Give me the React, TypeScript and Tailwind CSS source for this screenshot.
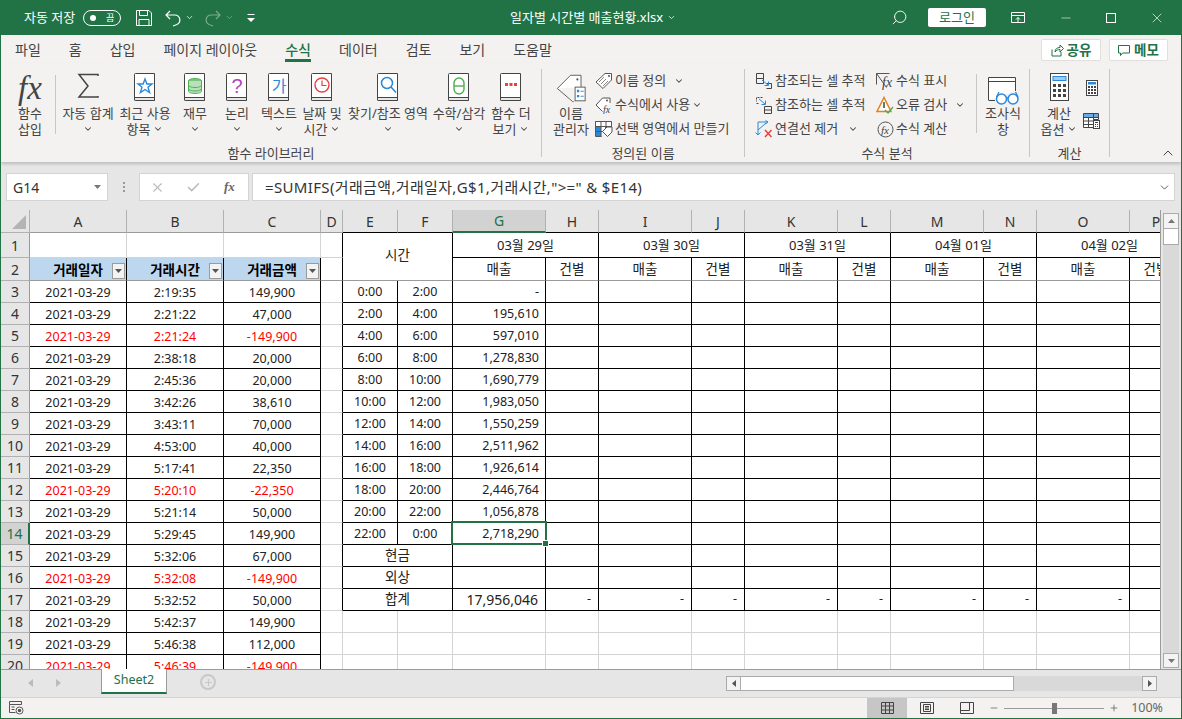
import { ReactNode } from "react";
import { ChevronDown, ChevronUp, Search, X, Minus, Plus, Check } from "lucide-react";
import clsx from "clsx";

const FONT = "font-['Noto_Sans','Noto_Sans_CJK_KR',sans-serif]";

// ---------- sheet data ----------
const SALES: [string, string, boolean][] = [
  ["2:19:35", "149,900", false],
  ["2:21:22", "47,000", false],
  ["2:21:24", "-149,900", true],
  ["2:38:18", "20,000", false],
  ["2:45:36", "20,000", false],
  ["3:42:26", "38,610", false],
  ["3:43:11", "70,000", false],
  ["4:53:00", "40,000", false],
  ["5:17:41", "22,350", false],
  ["5:20:10", "-22,350", true],
  ["5:21:14", "50,000", false],
  ["5:29:45", "149,900", false],
  ["5:32:06", "67,000", false],
  ["5:32:08", "-149,900", true],
  ["5:32:52", "50,000", false],
  ["5:42:37", "149,900", false],
  ["5:46:38", "112,000", false],
  ["5:46:39", "-149,900", true],
];

const SLOTS: [string, string, string][] = [
  ["0:00", "2:00", "-"],
  ["2:00", "4:00", "195,610"],
  ["4:00", "6:00", "597,010"],
  ["6:00", "8:00", "1,278,830"],
  ["8:00", "10:00", "1,690,779"],
  ["10:00", "12:00", "1,983,050"],
  ["12:00", "14:00", "1,550,259"],
  ["14:00", "16:00", "2,511,962"],
  ["16:00", "18:00", "1,926,614"],
  ["18:00", "20:00", "2,446,764"],
  ["20:00", "22:00", "1,056,878"],
  ["22:00", "0:00", "2,718,290"],
];

const COLUMNS = ["A", "B", "C", "D", "E", "F", "G", "H", "I", "J", "K", "L", "M", "N", "O", "P"];
const DATES = ["03월 29일", "03월 30일", "03월 31일", "04월 01일", "04월 02일"];
const TABS = ["파일", "홈", "삽입", "페이지 레이아웃", "수식", "데이터", "검토", "보기", "도움말"];
const RIGHT_EMPTY = ["H", "I", "J", "K", "L", "M", "N", "O", "P"];

// ---------- ribbon icons ----------
function Book({ children }: { children?: ReactNode }) {
  return (
    <svg width="22" height="28" viewBox="0 0 22 28" className="shrink-0">
      <path d="M1.500.5h19v27h-19a1 1 0 0 1-1-1V1.500a1 1 0 0 1 1-1z" fill="#fff" stroke="#444" />
      <path d="M.5 24.500h20" stroke="#444" />
      <path d="M1 25h19v2.500H1z" fill="#e8e8e8" />
      <path d="M.5 25.500v1a1 1 0 0 0 1 1h19" fill="none" stroke="#444" />
      {children}
    </svg>
  );
}

function Chevron({ className }: { className?: string }) {
  return <ChevronDown size={10} strokeWidth={2.500} className={clsx("text-[#444] shrink-0", className)} />;
}

function RibbonButton({
  width,
  icon,
  line1,
  line2,
  chevron,
}: {
  width: string;
  icon: ReactNode;
  line1: string;
  line2?: string;
  chevron?: boolean;
}) {
  return (
    <div className={clsx("flex flex-col items-center shrink-0", width)}>
      <div className="h-[32px] flex items-start justify-center">{icon}</div>
      <div className="text-[13px] leading-[16px] text-[#444] whitespace-nowrap">{line1}</div>
      <div className="h-[16px] text-[13px] leading-[16px] text-[#444] whitespace-nowrap flex items-center gap-[3px]">
        {line2}
        {chevron && <Chevron />}
      </div>
    </div>
  );
}

function TagIcon() {
  return (
    <svg width="18" height="18" viewBox="0 0 18 18" className="shrink-0">
      <path d="M1 10 10 1.500h6.500V8L8 16.500z" fill="#fff" stroke="#555" />
      <path d="M4 10l5-5M6 12l5-5M8 14l5-5" stroke="#888" />
      <circle cx="14" cy="4" r="1" fill="#555" />
    </svg>
  );
}

function NameManagerIcon() {
  return (
    <svg width="30" height="31" viewBox="0 0 32 34" className="shrink-0">
      <path d="M1 17 15.500 2.500H27v13M19 31.500h-1L1 17" fill="#fff" stroke="#555" />
      <circle cx="23" cy="7" r="1.200" fill="#555" />
      <rect x="20.500" y="15.500" width="11" height="15" fill="#fff" stroke="#555" />
      <path d="M22.500 18.500h2.500v2.500h-2.500zM22.500 24h2.500v2.500h-2.500z" fill="#2b88d8" />
      <path d="M26.500 20h3.500M26.500 25.500h3.500" stroke="#2b88d8" />
    </svg>
  );
}

function UseInFormulaIcon() {
  return (
    <svg width="18" height="18" viewBox="0 0 18 18" className="shrink-0">
      <path d="M7.500 15.500 1 9l6.500-7H15v5" fill="#fff" stroke="#555" />
      <circle cx="12" cy="4.500" r="1" fill="#555" />
      <text x="8" y="17" fontSize="10" fontStyle="italic" fontFamily="Liberation Serif, serif" fill="#444">
        fx
      </text>
    </svg>
  );
}

function FromSelectionIcon() {
  return (
    <svg width="18" height="16" viewBox="0 0 18 16" className="shrink-0">
      <path d="M.5.500h16v5h-6v5h-10z" fill="#fff" stroke="#555" />
      <path d="M1 5.500h5v10H1z" fill="#2b88d8" />
      <path d="M.5 5.500h16M6 .500v15M11 .500v5M.5 10.500h6M.5.500v15h6" fill="none" stroke="#555" />
      <path d="M7.500 10.500 12 6h5v5l-4.500 4.500z" fill="#fff" stroke="#555" />
    </svg>
  );
}

function TracePrecedentsIcon() {
  return (
    <svg width="18" height="18" viewBox="0 0 18 18" className="shrink-0">
      <path d="M1.500 1.500h7v5h-7zM1.500 6.500v5h7v-5" fill="none" stroke="#444" />
      <path d="M11.500 12.500h5v5h-5" fill="none" stroke="#444" transform="translate(0 -1)" />
      <path d="M7 8l6 5M13.500 9.500V13.500H9.500" fill="none" stroke="#2b88d8" />
    </svg>
  );
}

function TraceDependentsIcon() {
  return (
    <svg width="18" height="18" viewBox="0 0 18 18" className="shrink-0">
      <path d="M2.500 1.500h5M1.500 1.500v4M1.500 7.500h3" fill="none" stroke="#444" strokeDasharray="2 1" />
      <path d="M9.500 10.500h7v7h-7zM9.500 14h7" fill="none" stroke="#444" />
      <path d="M4 3l6 5M10.500 4.500V8.500H6.500" fill="none" stroke="#2b88d8" />
    </svg>
  );
}

function RemoveArrowsIcon() {
  return (
    <svg width="20" height="18" viewBox="0 0 20 18" className="shrink-0">
      <path d="M4 15V2h10M11.500.500 14 2l-2.500 2M1.500 12.500 4 15l2.500-2.500M4 10l8-7" fill="none" stroke="#2b88d8" />
      <path d="M11 10l6.500 7M17.500 10 11 17" stroke="#e8403f" strokeWidth="1.500" />
    </svg>
  );
}

function ShowFormulasIcon() {
  return (
    <svg width="18" height="18" viewBox="0 0 18 18" className="shrink-0">
      <path d="M.5 1.500h13M.5 1.500v11M.5 1.500l10 14" fill="none" stroke="#555" />
      <text x="6" y="15" fontSize="14" fontStyle="italic" fontFamily="Liberation Serif, serif" fill="#444">
        fx
      </text>
    </svg>
  );
}

function ErrorCheckIcon() {
  return (
    <svg width="18" height="18" viewBox="0 0 18 18" className="shrink-0">
      <path d="M8 1.500 1 15.500h14z" fill="#fff" stroke="#e8801a" strokeWidth="1.500" />
      <path d="M8 6v6" stroke="#444" strokeWidth="1.500" />
      <path d="M9 14l3 3 5-6" fill="none" stroke="#4caf50" strokeWidth="1.300" />
    </svg>
  );
}

function EvaluateIcon() {
  return (
    <svg width="17" height="17" viewBox="0 0 17 17" className="shrink-0">
      <circle cx="8.500" cy="8.500" r="7.500" fill="none" stroke="#555" />
      <text x="4" y="12.500" fontSize="11" fontStyle="italic" fontFamily="Liberation Serif, serif" fill="#444">
        fx
      </text>
    </svg>
  );
}

function WatchIcon() {
  return (
    <svg width="32" height="29" viewBox="0 0 32 29" className="shrink-0">
      <path d="M1.500 24V1.500h27V15" fill="#fff" stroke="#444" />
      <path d="M1.500 5.500h27" stroke="#444" />
      <path d="M1.500 24.500H8" stroke="#444" />
      <circle cx="14.500" cy="23" r="5" fill="#fff" stroke="#2b88d8" strokeWidth="1.500" />
      <circle cx="26" cy="23" r="5" fill="#fff" stroke="#2b88d8" strokeWidth="1.500" />
      <path d="M19.500 22h2M9.500 21 12 16M31 21l-2.500-5" fill="none" stroke="#2b88d8" strokeWidth="1.300" />
    </svg>
  );
}

function BigCalcIcon() {
  const keys = [0, 1, 2];
  return (
    <svg width="19" height="28" viewBox="0 0 19 28" className="shrink-0">
      <rect x=".5" y=".5" width="18" height="27" fill="#fff" stroke="#444" />
      <rect x="3" y="3.500" width="13" height="4" fill="#9ecbf0" stroke="#2b88d8" />
      {keys.map((r) =>
        keys.map((c) => <rect key={`${r}${c}`} x={3 + c * 5} y={11 + r * 5} width="3" height="3" fill="#444" />),
      )}
    </svg>
  );
}

function SmallCalcIcon() {
  const rows = [0, 1, 2];
  const cols = [0, 1, 2];
  return (
    <svg width="12" height="16" viewBox="0 0 12 16" className="shrink-0">
      <rect x=".5" y=".5" width="11" height="15" fill="#fff" stroke="#444" />
      <rect x="2" y="2" width="8" height="2.500" fill="#2b88d8" />
      {rows.map((r) =>
        cols.map((c) => <rect key={`${r}${c}`} x={2 + c * 3} y={6 + r * 3} width="2" height="2" fill="#444" />),
      )}
    </svg>
  );
}

function CalcSheetIcon() {
  return (
    <svg width="17" height="16" viewBox="0 0 17 16" className="shrink-0">
      <path d="M.5.500h15v6h-5v8H.5z" fill="#fff" stroke="#444" />
      <rect x="1" y="1" width="14" height="3" fill="#2b88d8" opacity=".7" />
      <path d="M.5 4.500h15M.5 8h10M.5 11.500h10M5.500 4.500v10M10.500.500v6" stroke="#444" />
      <rect x="10.500" y="7.500" width="6" height="8" fill="#fff" stroke="#444" />
      <path d="M12 9.500h3M12 11.500h1M14 11.500h1M12 13.500h1M14 13.500h1" stroke="#444" />
    </svg>
  );
}

function Separator({ className }: { className?: string }) {
  return <div className={clsx("w-px bg-[#c8c6c4] shrink-0", className)} />;
}

function SmallRow({ icon, label, chevron, gap }: { icon: ReactNode; label: string; chevron?: string; gap?: string }) {
  return (
    <div className="h-[24px] flex items-center whitespace-nowrap text-[13px] text-[#444]">
      <span className="w-[20px] flex justify-center shrink-0">{icon}</span>
      <span className={clsx("ml-[1px]", gap)}>{label}</span>
      {chevron !== undefined && <Chevron className={chevron} />}
    </div>
  );
}

function GroupLabel({ children }: { children: string }) {
  return <div className="h-[20px] text-center text-[13px] leading-[22px] text-[#444] whitespace-nowrap">{children}</div>;
}

function Ribbon() {
  return (
    <div className="h-[99px] bg-[#f3f2f1] flex shrink-0 shadow-[0_2px_3px_rgba(0,0,0,0.18)] relative z-10">
      {/* 함수 라이브러리 */}
      <div className="w-[540px] shrink-0 flex flex-col">
        <div className="h-[79px] pt-[10px] flex">
          <div className="w-[54px] shrink-0 flex flex-col items-center pl-[4px]">
            <div className="h-[32px] text-[33px] leading-[30px] italic font-['Liberation_Serif',serif] text-[#444]">fx</div>
            <div className="text-[13px] leading-[16px] text-[#444]">함수</div>
            <div className="text-[13px] leading-[16px] text-[#444]">삽입</div>
          </div>
          <Separator className="h-[59px] mt-[2px]" />
          <div className="flex pl-[1px]">
            <RibbonButton
              width="w-[62px]"
              line1="자동 합계"
              chevron
              icon={
                <svg width="22" height="26" viewBox="0 0 22 26">
                  <path d="M21 3V1.500H2l9 11.500-9 11h19V23" fill="none" stroke="#444" strokeWidth="1.500" />
                </svg>
              }
            />
            <RibbonButton
              width="w-[52px]"
              line1="최근 사용"
              line2="항목"
              chevron
              icon={
                <Book>
                  <path d="M11 6l1.900 5h5.100l-4 3.300 1.600 5.200L11 16.500l-4.600 3 1.600-5.200-4-3.300h5.100z" fill="#fff" stroke="#2b88d8" strokeWidth="1.400" />
                </Book>
              }
            />
            <RibbonButton
              width="w-[48px]"
              line1="재무"
              chevron
              icon={
                <Book>
                  <ellipse cx="11" cy="8" rx="6.500" ry="2.500" fill="#7cc47f" stroke="#4caf50" />
                  <path d="M4.500 8v10c0 1.500 3 2.500 6.500 2.500s6.500-1 6.500-2.500V8" fill="#b8e0ba" stroke="#4caf50" />
                  <path d="M4.500 12c0 1.500 3 2.500 6.500 2.500s6.500-1 6.500-2.500M4.500 15.500c0 1.500 3 2.500 6.500 2.500s6.500-1 6.500-2.500" fill="none" stroke="#4caf50" />
                </Book>
              }
            />
            <RibbonButton
              width="w-[36px]"
              line1="논리"
              chevron
              icon={
                <Book>
                  <text x="11" y="20" textAnchor="middle" fontSize="20" fill="#b146c2" fontFamily="Liberation Sans, sans-serif">
                    ?
                  </text>
                </Book>
              }
            />
            <RibbonButton
              width="w-[48px]"
              line1="텍스트"
              chevron
              icon={
                <Book>
                  <text x="11" y="19" textAnchor="middle" fontSize="16" fill="#2b88d8" fontFamily="Noto Sans CJK KR, sans-serif">
                    가
                  </text>
                </Book>
              }
            />
            <RibbonButton
              width="w-[38px]"
              line1="날짜 및"
              line2="시간"
              chevron
              icon={
                <Book>
                  <circle cx="11" cy="12" r="7" fill="#fff" stroke="#e8403f" strokeWidth="1.400" />
                  <path d="M11 7.500V12.500h4.500" fill="none" stroke="#e8403f" strokeWidth="1.200" />
                </Book>
              }
            />
            <RibbonButton
              width="w-[94px]"
              line1="찾기/참조 영역"
              chevron
              icon={
                <Book>
                  <circle cx="10" cy="10" r="5.500" fill="#fff" stroke="#2b88d8" strokeWidth="1.500" />
                  <path d="M14 14l5 5.500" stroke="#2b88d8" strokeWidth="1.600" />
                </Book>
              }
            />
            <RibbonButton
              width="w-[48px]"
              line1="수학/삼각"
              chevron
              icon={
                <Book>
                  <rect x="6" y="5" width="10" height="16" rx="5" fill="#fff" stroke="#4caf50" strokeWidth="1.400" />
                  <path d="M6 13h10" stroke="#4caf50" strokeWidth="1.400" />
                </Book>
              }
            />
            <RibbonButton
              width="w-[56px]"
              line1="함수 더"
              line2="보기"
              chevron
              icon={
                <Book>
                  <path d="M5 10h3v3H5zM9.500 10h3v3h-3zM14 10h3v3h-3z" fill="#e8403f" />
                </Book>
              }
            />
          </div>
        </div>
        <GroupLabel>함수 라이브러리</GroupLabel>
      </div>
      <Separator className="h-[88px] mt-[6px]" />

      {/* 정의된 이름 */}
      <div className="w-[202px] shrink-0 flex flex-col">
        <div className="h-[79px] pt-[6px] flex">
          <div className="w-[52px] pl-[6px] shrink-0 flex flex-col items-center">
            <div className="h-[32px] mt-[4px]">
              <NameManagerIcon />
            </div>
            <div className="text-[13px] leading-[16px] text-[#444]">이름</div>
            <div className="text-[13px] leading-[16px] text-[#444]">관리자</div>
          </div>
          <div className="flex flex-col">
            <SmallRow icon={<TagIcon />} label="이름 정의" gap="mr-[8px]" chevron="" />
            <SmallRow icon={<UseInFormulaIcon />} label="수식에서 사용" chevron="ml-[2px]" />
            <SmallRow icon={<FromSelectionIcon />} label="선택 영역에서 만들기" />
          </div>
        </div>
        <GroupLabel>정의된 이름</GroupLabel>
      </div>
      <Separator className="h-[88px] mt-[6px]" />

      {/* 수식 분석 */}
      <div className="w-[284px] shrink-0 flex flex-col">
        <div className="h-[79px] pt-[6px] flex">
          <div className="w-[230px] shrink-0 flex pl-[9px]">
            <div className="w-[121px] shrink-0 flex flex-col">
              <SmallRow icon={<TracePrecedentsIcon />} label="참조되는 셀 추적" />
              <SmallRow icon={<TraceDependentsIcon />} label="참조하는 셀 추적" />
              <SmallRow icon={<RemoveArrowsIcon />} label="연결선 제거" gap="mr-[10px]" chevron="" />
            </div>
            <div className="flex flex-col">
              <SmallRow icon={<ShowFormulasIcon />} label="수식 표시" />
              <SmallRow icon={<ErrorCheckIcon />} label="오류 검사" gap="mr-[8px]" chevron="" />
              <SmallRow icon={<EvaluateIcon />} label="수식 계산" />
            </div>
          </div>
          <Separator className="h-[59px] mt-[5px] ml-[1px]" />
          <div className="flex-1 flex flex-col items-center pt-[7px]">
            <div className="h-[29px]">
              <WatchIcon />
            </div>
            <div className="text-[13px] leading-[16px] text-[#444]">조사식</div>
            <div className="text-[13px] leading-[16px] text-[#444]">창</div>
          </div>
        </div>
        <GroupLabel>수식 분석</GroupLabel>
      </div>
      <Separator className="h-[88px] mt-[6px]" />

      {/* 계산 */}
      <div className="w-[79px] shrink-0 flex flex-col">
        <div className="h-[79px] pt-[10px] flex">
          <div className="w-[52px] pl-[6px] shrink-0 flex flex-col items-center">
            <div className="h-[32px]">
              <BigCalcIcon />
            </div>
            <div className="text-[13px] leading-[16px] text-[#444]">계산</div>
            <div className="text-[13px] leading-[16px] text-[#444] flex items-center gap-[3px]">
              옵션
              <Chevron />
            </div>
          </div>
          <div className="flex flex-col items-center gap-[17px] pt-[7px] pl-[1px]">
            <SmallCalcIcon />
            <CalcSheetIcon />
          </div>
        </div>
        <GroupLabel>계산</GroupLabel>
      </div>
      <Separator className="h-[88px] mt-[6px]" />

      <div className="flex-1 flex justify-end items-end pr-[5px] pb-[1px]">
        <ChevronUp size={16} strokeWidth={1.500} className="text-[#444]" />
      </div>
    </div>
  );
}

function TitleBar() {
  return (
    <div className="h-[35px] bg-[#217346] text-white flex items-center shrink-0 text-[13px] relative">
      <span className="ml-[23px] whitespace-nowrap">자동 저장</span>
      <div className="ml-[8px] w-[38px] h-[16px] rounded-full border border-white flex items-center justify-between pl-[6px] pr-[6px]">
        <span className="w-[6px] h-[6px] rounded-full bg-white" />
        <span className="text-[9px] leading-none">끔</span>
      </div>
      <svg width="18" height="18" viewBox="0 0 18 18" className="ml-[14px]">
        <path d="M1.500 1.500h12.500l2.500 2.500v12.500h-15z M4.500 1.500v5h8v-5M4 16.500v-6h10v6" fill="none" stroke="#fff" />
      </svg>
      <svg width="18" height="18" viewBox="0 0 18 18" className="ml-[11px]">
        <path d="M6 2 2 6l4 4M2.500 6H11a5 5 0 0 1 2 9.500L9 17" fill="none" stroke="#fff" strokeWidth="1.200" />
      </svg>
      <ChevronDown size={9} strokeWidth={2} className="ml-[3px] text-white" />
      <svg width="18" height="18" viewBox="0 0 18 18" className="ml-[10px] opacity-40">
        <path d="M12 2l4 4-4 4M15.500 6H7a5 5 0 0 0-2 9.500L9 17" fill="none" stroke="#fff" strokeWidth="1.200" />
      </svg>
      <ChevronDown size={9} strokeWidth={2} className="ml-[3px] text-white opacity-40" />
      <svg width="10" height="10" viewBox="0 0 10 10" className="ml-[12px]">
        <path d="M1.500 1.500h7" stroke="#fff" />
        <path d="M1 5h8L5 9z" fill="#fff" />
      </svg>
      <div className="absolute left-[509px] top-[8px] flex items-center gap-[4px] whitespace-nowrap">
        일자별 시간별 매출현황.xlsx
        <ChevronDown size={9} strokeWidth={2} />
      </div>
      <div className="ml-auto flex items-center">
        <Search size={17} strokeWidth={1.300} className="-scale-x-100" />
        <div className="ml-[20px] w-[58px] h-[19px] bg-white rounded-[2px] text-[#217346] text-[13px] leading-[19px] text-center">로그인</div>
        <svg width="14" height="12" viewBox="0 0 14 12" className="ml-[25px]">
          <path d="M.5.500h13v10H.5zM.5 3.500h13M7 10V5.500M5 7.500l2-2 2 2" fill="none" stroke="#fff" />
        </svg>
        <Minus size={14} strokeWidth={1} className="ml-[34px]" />
        <div className="ml-[33px] w-[10px] h-[10px] border border-white" />
        <X size={16} strokeWidth={1} className="ml-[33px] mr-[16px]" />
      </div>
    </div>
  );
}

function TabStrip() {
  return (
    <div className="h-[28px] bg-[#f3f2f1] flex items-start shrink-0 pl-[14px] text-[14px] text-[#444]">
      <div className="flex gap-[28px]">
        {TABS.map((t) => (
          <div key={t} className={clsx("relative h-[27px] leading-[29px] whitespace-nowrap", t === "수식" && "font-medium text-[#217346]")}>
            {t}
            {t === "수식" && <div className="absolute left-0 right-0 bottom-0 h-[3px] bg-[#217346]" />}
          </div>
        ))}
      </div>
      <div className="ml-auto flex gap-[8px] pr-[13px] pt-[4px]">
        <div className="w-[60px] h-[22px] bg-white border border-[#e1dfdd] rounded-[2px] flex items-center justify-center gap-[3px] font-bold text-[#217346] text-[13.500px]">
          <svg width="13" height="13" viewBox="0 0 13 13">
            <path d="M1 5.500v6.500h9V8M4 8c0-3 2-4.500 5-4.500V1l3.500 3.500L9 8V5.500C7 5.500 5.500 6 4 8z" fill="none" stroke="#217346" />
          </svg>
          공유
        </div>
        <div className="w-[59px] h-[22px] bg-white border border-[#e1dfdd] rounded-[2px] flex items-center justify-center gap-[3px] font-bold text-[#217346] text-[13.500px]">
          <svg width="13" height="13" viewBox="0 0 13 13">
            <path d="M.5 1.500h11v7.500H4.500L2.500 11.500V9H.5z" fill="none" stroke="#217346" />
          </svg>
          메모
        </div>
      </div>
    </div>
  );
}

function FormulaBar() {
  return (
    <div className="h-[48px] bg-[#e6e6e6] flex items-start shrink-0 pt-[11px] pl-[5px] pr-[6px]">
      <div className="w-[102px] h-[28px] bg-white border border-[#d4d4d4] flex items-center justify-between pl-[6px] pr-[6px] text-[14px] text-[#333]">
        G14
        <svg width="7" height="4" viewBox="0 0 7 4">
          <path d="M0 0h7L3.500 4z" fill="#777" />
        </svg>
      </div>
      <div className="w-[31px] h-[28px] flex flex-col items-center justify-center gap-[2px]">
        <span className="w-[2px] h-[2px] bg-[#999]" />
        <span className="w-[2px] h-[2px] bg-[#999]" />
        <span className="w-[2px] h-[2px] bg-[#999]" />
      </div>
      <div className="w-[110px] h-[28px] bg-white border border-[#d4d4d4] flex items-center pl-[10px] text-[#bbb]">
        <X size={15} strokeWidth={1.800} />
        <Check size={15} strokeWidth={2.400} className="ml-[21px]" />
        <span className="ml-[23px] text-[13px] italic font-bold font-['Liberation_Serif',serif] text-[#666]">fx</span>
      </div>
      <div className="ml-[3px] flex-1 h-[28px] bg-white border border-[#d4d4d4] flex items-center pl-[12px] pr-[3px] text-[15px] tracking-[0.35px] text-[#333] whitespace-nowrap">
        =SUMIFS(거래금액,거래일자,G$1,거래시간,"&gt;=" &amp; $E14)
        <ChevronDown size={13} strokeWidth={1.600} className="ml-auto text-[#444]" />
      </div>
    </div>
  );
}

// ---------- sheet grid ----------
const GRID = "border-[#d4d4d4]";
const BLACK = "border-black";
const CELL = "flex items-center min-w-0 whitespace-nowrap border-r border-b text-[12.500px] text-[#222]";
const KOREAN = "text-[13.500px]";

function ColHeader({ name }: { name: string }) {
  const active = name === "G";
  const framed = COLUMNS.indexOf(name) >= 4;
  return (
    <div
      className={clsx(
        "flex items-center justify-center border-r border-[#b1b1b1] text-[14px]",
        active ? "bg-[#d2d2d2] text-[#217346] border-b-2 border-b-[#217346]" : "bg-[#e6e6e6] text-[#333] border-b",
        !active && (framed ? "border-b-black" : "border-b-[#9b9b9b]"),
      )}
    >
      {name}
    </div>
  );
}

function RowHeader({ n }: { n: number }) {
  const active = n === 14;
  return (
    <div
      className={clsx(
        "flex items-center justify-center border-r text-[14px] border-b",
        active ? "bg-[#d2d2d2] text-[#217346] border-r-[#217346] border-r-2 border-b-[#b1b1b1]" : "bg-[#e6e6e6] text-[#333] border-r-[#9b9b9b] border-b-[#b1b1b1]",
        n === 2 && "border-b-[#9b9b9b]",
      )}
    >
      {n}
    </div>
  );
}

function FilterHeader({ label }: { label: string }) {
  return (
    <div className={clsx(CELL, KOREAN, "bg-[#bdd7ee] border-r-black border-b-[#9b9b9b] relative justify-center pt-[2px] font-bold text-black")}>
      {label}
      <span className="absolute right-[1px] top-[5px] w-[13px] h-[16px] bg-[#f3f3f3] border border-[#9b9b9b] flex items-center justify-center">
        <svg width="7" height="4" viewBox="0 0 7 4">
          <path d="M0 0h7L3.500 4z" fill="#555" />
        </svg>
      </span>
    </div>
  );
}

function Sheet() {
  const rows = SALES.map((s, i) => ({ n: i + 3, sale: s, slot: SLOTS[i] }));
  return (
    <div className="grid grid-cols-[29px_97px_97px_97px_22px_55px_55px_93px_53px_93px_53px_93px_53px_93px_53px_93px_53px] grid-rows-[23px_25px_23px_repeat(18,22px)] w-max">
      {/* column headers */}
      <div className="bg-[#e6e6e6] border-r border-b border-[#b1b1b1] flex items-end justify-end pr-[3px] pb-[3px]">
        <svg width="14" height="14" viewBox="0 0 14 14">
          <path d="M14 0v14H0z" fill="#b4b4b4" />
        </svg>
      </div>
      {COLUMNS.map((c) => (
        <ColHeader key={c} name={c} />
      ))}

      {/* row 1 */}
      <RowHeader n={1} />
      <div className={clsx(CELL, GRID)} />
      <div className={clsx(CELL, GRID)} />
      <div className={clsx(CELL, GRID)} />
      <div className={clsx(CELL, "border-b-[#d4d4d4] border-r-black")} />
      <div className={clsx(CELL, KOREAN, BLACK, "col-span-2 row-span-2 justify-center border-b-[#9b9b9b] pb-[2px]")}>시간</div>
      {DATES.map((d) => (
        <div key={d} className={clsx(CELL, BLACK, "col-span-2 justify-center pt-[1px] text-[13px]")}>
          {d}
        </div>
      ))}

      {/* row 2 */}
      <RowHeader n={2} />
      <FilterHeader label="거래일자" />
      <FilterHeader label="거래시간" />
      <FilterHeader label="거래금액" />
      <div className={clsx(CELL, "border-b-[#9b9b9b] border-r-black")} />
      {DATES.map((d) => [
        <div key={`${d}a`} className={clsx(CELL, KOREAN, "border-r-black border-b-[#9b9b9b] justify-center")}>
          매출
        </div>,
        <div key={`${d}b`} className={clsx(CELL, KOREAN, "border-r-black border-b-[#9b9b9b] justify-center")}>
          건별
        </div>,
      ])}

      {rows.map(({ n, sale, slot }) => {
        const color = sale[2] ? "text-[#ff0000]" : "";
        const inFrame = n <= 17;
        return [
          <RowHeader key={`h${n}`} n={n} />,
          <div key={`a${n}`} className={clsx(CELL, BLACK, color, "justify-center pt-[4px]")}>
            2021-03-29
          </div>,
          <div key={`b${n}`} className={clsx(CELL, BLACK, color, "justify-center pt-[4px]")}>
            {sale[0]}
          </div>,
          <div key={`c${n}`} className={clsx(CELL, BLACK, color, "justify-center pt-[4px]")}>
            {sale[1]}
          </div>,
          <div key={`d${n}`} className={clsx(CELL, GRID, inFrame && "border-r-black")} />,
          ...rightPane(n, slot),
        ];
      })}
    </div>
  );
}

function rightPane(n: number, slot?: [string, string, string]) {
  if (slot) {
    return [
      <div key={`e${n}`} className={clsx(CELL, BLACK, "justify-center pt-[1px]")}>
        {slot[0]}
      </div>,
      <div key={`f${n}`} className={clsx(CELL, BLACK, "justify-center pt-[1px]")}>
        {slot[1]}
      </div>,
      <div key={`g${n}`} className={clsx(CELL, BLACK, "justify-end pr-[6px] pt-[1px]", n === 14 && "relative")}>
        {slot[2]}
        {n === 14 && (
          <span className="absolute -left-[2px] -top-[2px] -right-[2px] -bottom-[1px] border-2 border-[#217346] z-10">
            <span className="absolute -right-[4px] -bottom-[4px] w-[5px] h-[5px] bg-[#217346] box-content border border-white" />
          </span>
        )}
      </div>,
      ...RIGHT_EMPTY.map((c) => <div key={`${c}${n}`} className={clsx(CELL, BLACK)} />),
    ];
  }
  if (n === 15 || n === 16 || n === 17) {
    const label = n === 15 ? "현금" : n === 16 ? "외상" : "합계";
    return [
      <div key={`e${n}`} className={clsx(CELL, KOREAN, BLACK, "col-span-2 justify-center pb-[1px]")}>
        {label}
      </div>,
      <div key={`g${n}`} className={clsx(CELL, BLACK, "justify-end pr-[7px] text-[14px]")}>
        {n === 17 ? "17,956,046" : ""}
      </div>,
      ...RIGHT_EMPTY.map((c) => (
        <div key={`${c}${n}`} className={clsx(CELL, BLACK, "justify-end pr-[7px]")}>
          {n === 17 && c !== "P" ? "-" : ""}
        </div>
      )),
    ];
  }
  return ["E", "F", "G", ...RIGHT_EMPTY].map((c) => <div key={`${c}${n}`} className={clsx(CELL, GRID)} />);
}

function VScroll() {
  return (
    <div className="w-[21px] shrink-0 bg-[#e6e6e6] border-l border-[#9b9b9b] flex flex-col items-center pt-[3px]">
      <div className="w-[16px] h-[16px] bg-[#f3f3f3] border border-[#ababab] flex items-center justify-center">
        <svg width="7" height="4" viewBox="0 0 7 4">
          <path d="M3.500 0 7 4H0z" fill="#777" />
        </svg>
      </div>
      <div className="w-[16px] flex-1 bg-[#d9d9d9] flex flex-col">
        <div className="w-[16px] h-[16px] bg-white border border-t-0 border-[#ababab]" />
      </div>
      <div className="w-[16px] h-[15px] bg-[#f3f3f3] border border-[#ababab] flex items-center justify-center mb-px">
        <svg width="7" height="4" viewBox="0 0 7 4">
          <path d="M0 0h7L3.500 4z" fill="#777" />
        </svg>
      </div>
    </div>
  );
}

function SheetTabs() {
  return (
    <div className="h-[28px] bg-[#e6e6e6] border-t border-[#9b9b9b] flex items-start shrink-0">
      <svg width="6" height="8" viewBox="0 0 6 8" className="ml-[27px] mt-[9px]">
        <path d="M5 0v8L0 4z" fill="#bbb" />
      </svg>
      <svg width="6" height="8" viewBox="0 0 6 8" className="ml-[22px] mt-[9px]">
        <path d="M0 0v8l5-4z" fill="#bbb" />
      </svg>
      <div className="ml-[39px] -mt-px w-[66px] h-[25px] bg-white border-x border-[#9b9b9b] border-b-2 border-b-[#217346] text-[#217346] text-[12.500px] flex items-center justify-center">
        Sheet2
      </div>
      <div className="ml-[33px] mt-[4px] w-[16px] h-[16px] rounded-full border-2 border-[#c8c8c8] flex items-center justify-center">
        <Plus size={11} strokeWidth={2.500} className="text-[#c8c8c8]" />
      </div>
      <div className="ml-auto mt-[6px] mr-[24px] flex h-[15px] w-[431px]">
        <div className="w-[15px] h-[15px] bg-[#f3f3f3] border border-[#ababab] flex items-center justify-center">
          <svg width="4" height="7" viewBox="0 0 4 7">
            <path d="M4 0v7L0 3.500z" fill="#555" />
          </svg>
        </div>
        <div className="w-[273px] bg-white border-y border-r border-[#ababab]" />
        <div className="flex-1 bg-[#d9d9d9]" />
        <div className="w-[15px] h-[15px] bg-[#f3f3f3] border border-[#ababab] flex items-center justify-center">
          <svg width="4" height="7" viewBox="0 0 4 7">
            <path d="M0 0v7l4-3.500z" fill="#555" />
          </svg>
        </div>
      </div>
    </div>
  );
}

function StatusBar() {
  return (
    <div className="h-[21px] bg-[#f3f2f1] border-t border-[#d4d4d4] flex items-center shrink-0 text-[#444]">
      <svg width="15" height="14" viewBox="0 0 15 14" className="ml-[8px]">
        <path d="M.5.500h12v3H.5zM.5 3.500v8h6M2.500 6h3M2.500 8.500h3" fill="none" stroke="#555" />
        <circle cx="10.500" cy="9.500" r="3.500" fill="#fff" stroke="#555" />
        <circle cx="10.500" cy="9.500" r="1.800" fill="#555" />
      </svg>
      <div className="ml-auto flex items-center h-full">
        <div className="w-[40px] h-full bg-[#c6c6c6] flex items-center justify-center">
          <svg width="13" height="12" viewBox="0 0 13 12">
            <path d="M.5.500h12v11H.5zM4.500.500v11M8.500.500v11M.5 4h12M.5 8h12" fill="none" stroke="#444" />
          </svg>
        </div>
        <div className="w-[40px] h-full flex items-center justify-center">
          <svg width="14" height="12" viewBox="0 0 14 12">
            <path d="M.5.500h13v11H.5zM3.500 2.500h7v7h-7zM5 4.500h4M5 6h4M5 7.500h4" fill="none" stroke="#444" />
          </svg>
        </div>
        <div className="w-[40px] h-full flex items-center justify-center">
          <svg width="14" height="12" viewBox="0 0 14 12">
            <path d="M.5.500h13v11H.5zM.5 8.500h9v-8" fill="none" stroke="#444" />
          </svg>
        </div>
        <Minus size={10} strokeWidth={1.500} className="ml-[2px]" />
        <div className="ml-[5px] w-[100px] h-px bg-[#9b9b9b] relative">
          <span className="absolute left-[48px] -top-[5px] w-[5px] h-[11px] bg-[#777]" />
        </div>
        <Plus size={10} strokeWidth={1.500} className="ml-[5px]" />
        <span className="ml-[12px] mr-[18px] text-[12.500px] text-[#666]">100%</span>
      </div>
    </div>
  );
}

export default function App() {
  return (
    <div className={clsx("w-[1182px] h-[719px] overflow-hidden flex flex-col bg-[#e6e6e6] border-x border-b border-[#217346]", FONT)}>
      <TitleBar />
      <TabStrip />
      <Ribbon />
      <FormulaBar />
      <div className="flex-1 min-h-0 flex">
        <div className="flex-1 min-w-0 overflow-hidden bg-white">
          <Sheet />
        </div>
        <VScroll />
      </div>
      <SheetTabs />
      <StatusBar />
    </div>
  );
}
